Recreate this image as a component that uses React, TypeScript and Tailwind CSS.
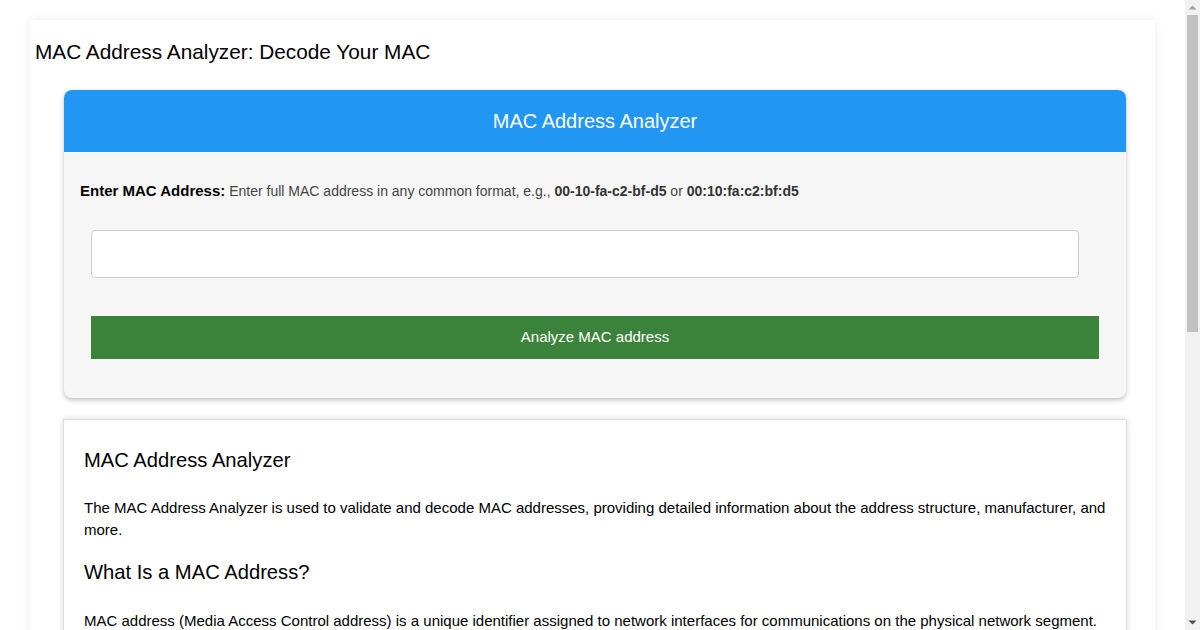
function FakeScrollbar() {
  return (
    <div className="fixed right-0 top-0 flex h-[630px] w-[15px] flex-col items-center bg-[#f1f1f1]">
      <svg width="15" height="15" viewBox="0 0 15 15" className="shrink-0">
        <path d="M3.5 9.5 L7.5 5.5 L11.5 9.5 Z" fill="#a3a3a3" />
      </svg>
      <div className="h-[317px] w-[11px] shrink-0 bg-[#c1c1c1]" />
      <div className="flex-1" />
      <svg width="15" height="15" viewBox="0 0 15 15" className="shrink-0">
        <path d="M3.5 5.5 L11.5 5.5 L7.5 9.5 Z" fill="#505050" />
      </svg>
    </div>
  );
}

export default function App() {
  return (
    <div className="min-h-[1400px] bg-white font-['Liberation_Sans',Arial,sans-serif] text-black">
      <div className="ml-[30px] mt-[20px] w-[1125px] bg-white p-[5px] pb-10 shadow-[0_0_10px_rgba(0,0,0,0.08)]">
        <h1 className="mt-[15px] text-[20.8px] leading-[23px]">MAC Address Analyzer: Decode Your MAC</h1>

        <div className="ml-[29px] mt-[27px] w-[1062px] overflow-hidden rounded-lg bg-[#f6f6f6] shadow-[0_2px_5px_rgba(0,0,0,0.25)]">
          <div className="flex h-[62px] items-center justify-center bg-[#2196f3] text-[20px] text-white">
            MAC Address Analyzer
          </div>
          <div className="px-4 pb-[39px] pt-[30px]">
            <p className="text-[14px] leading-[18px] text-[#444]">
              <b className="text-[15px] text-black">Enter MAC Address:</b> Enter full MAC address in any common format, e.g.,{" "}
              <b className="text-[#333]">00-10-fa-c2-bf-d5</b> or <b className="text-[#333]">00:10:fa:c2:bf:d5</b>
            </p>
            <input
              type="text"
              className="ml-[11px] mt-[30px] block h-[48px] w-[988px] rounded border border-[#ccc] bg-white px-3 text-[15px] outline-none"
            />
            <button
              type="button"
              className="ml-[11px] mt-[38px] block h-[43px] w-[1008px] bg-[#3b833a] text-[15px] text-white"
            >
              Analyze MAC address
            </button>
          </div>
        </div>

        <div className="ml-[28px] mt-[21px] w-[1064px] border border-[#ddd] bg-white px-5 pb-6 pt-[29px] shadow-[0_0_6px_rgba(0,0,0,0.15)]">
          <h2 className="text-[20.2px] leading-[23px]">MAC Address Analyzer</h2>
          <p className="mt-[25px] text-[15px] leading-[22px]">
            The MAC Address Analyzer is used to validate and decode MAC addresses, providing detailed information about the address structure, manufacturer, and more.
          </p>
          <h2 className="mt-5 text-[20.2px] leading-[23px]">What Is a MAC Address?</h2>
          <p className="mt-[26px] text-[15px] leading-[22px]">
            MAC address (Media Access Control address) is a unique identifier assigned to network interfaces for communications on the physical network segment.
          </p>
          <p className="mt-5 text-[15px] leading-[22px]">
            The first half of the address identifies the manufacturer of the network interface (the Organizationally Unique Identifier), while the second half is assigned by the manufacturer.
          </p>
        </div>
      </div>
      <FakeScrollbar />
    </div>
  );
}
